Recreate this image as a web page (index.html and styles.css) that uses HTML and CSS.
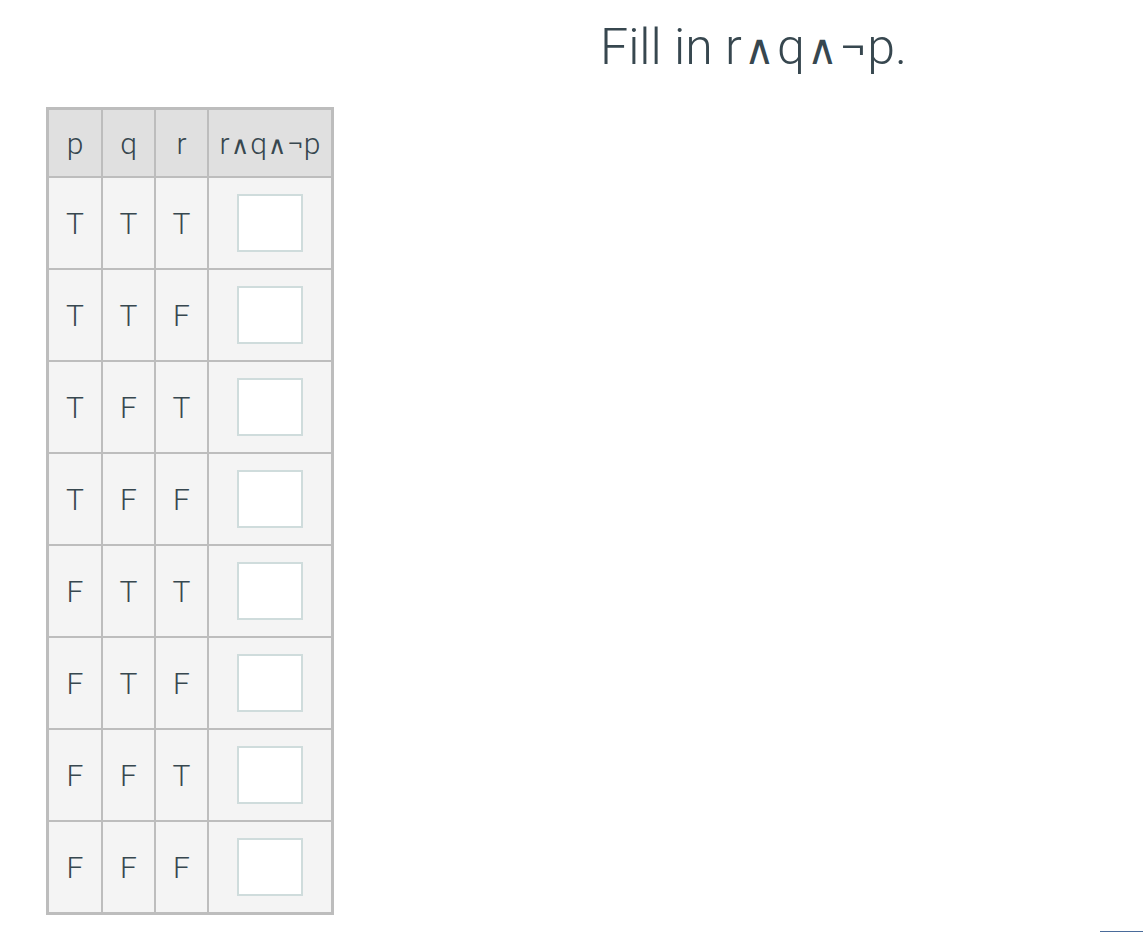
FILE: index.html
```html
<!DOCTYPE html>
<html>
<head>
<meta charset="utf-8">
<link rel="stylesheet" href="styles.css">
</head>
<body>
<div class="page">
  <div class="left">
    <table class="truth">
      <thead>
        <tr><th class="c1">p</th><th class="c2">q</th><th class="c3">r</th><th class="c4">r<span class="op">∧</span>q<span class="op">∧</span>¬p</th></tr>
      </thead>
      <tbody>
        <tr><td>T</td><td>T</td><td>T</td><td class="ans"><div class="box"></div></td></tr>
        <tr><td>T</td><td>T</td><td>F</td><td class="ans"><div class="box"></div></td></tr>
        <tr><td>T</td><td>F</td><td>T</td><td class="ans"><div class="box"></div></td></tr>
        <tr><td>T</td><td>F</td><td>F</td><td class="ans"><div class="box"></div></td></tr>
        <tr><td>F</td><td>T</td><td>T</td><td class="ans"><div class="box"></div></td></tr>
        <tr><td>F</td><td>T</td><td>F</td><td class="ans"><div class="box"></div></td></tr>
        <tr><td>F</td><td>F</td><td>T</td><td class="ans"><div class="box"></div></td></tr>
        <tr><td>F</td><td>F</td><td>F</td><td class="ans"><div class="box"></div></td></tr>
      </tbody>
    </table>
  </div>
  <h1 class="title">Fill in r<span class="op">∧</span>q<span class="op">∧</span>¬p.</h1>
</div>
<div class="corner-line"></div>
</body>
</html>
```

FILE: styles.css
```css
html, body {
  margin: 0;
  padding: 0;
  background: #ffffff;
}
body {
  font-family: Roboto, "Liberation Sans", sans-serif;
  font-weight: 300;
  color: #37474f;
  width: 1143px;
  height: 933px;
  overflow: hidden;
  position: relative;
}
.page {
  display: flex;
  align-items: flex-start;
  padding-left: 46px;
}
.left {
  padding-top: 107px;
}
.title {
  margin: 17px 0 0 266px;
  font-size: 50px;
  font-weight: 300;
  line-height: 60px;
  color: #37474f;
  white-space: nowrap;
}
.op {
  font-size: 0.84em;
  font-weight: 300;
  padding: 0 0.05em;
}
.truth {
  border-collapse: separate;
  border-spacing: 0;
  border: 2px solid #bdbdbd;
  font-size: 30px;
}
.truth th, .truth td {
  border: 1px solid #bdbdbd;
  padding: 0;
  text-align: center;
  vertical-align: middle;
  font-weight: 300;
  color: #37474f;
}
.truth th {
  background: #e0e0e0;
  height: 66px;
}
.truth td {
  background: #f4f4f4;
  height: 90px;
}
.c1 { width: 52px; }
.c2 { width: 51px; }
.c3 { width: 51px; }
.c4 { width: 122px; }
.box {
  width: 62px;
  height: 54px;
  margin: 0 auto;
  background: #ffffff;
  border: 2px solid #cfdcdc;
}
.corner-line {
  position: absolute;
  right: 0;
  bottom: 1px;
  width: 43px;
  height: 1px;
  background: #4a6b9a;
}
```
